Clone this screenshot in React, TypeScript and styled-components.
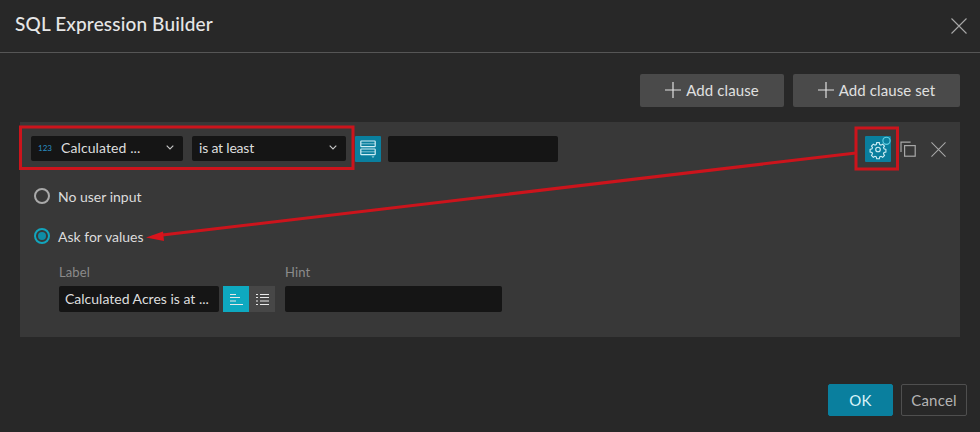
import React from "react";
import styled, { createGlobalStyle } from "styled-components";

const GlobalStyle = createGlobalStyle`
  html, body {
    margin: 0;
    padding: 0;
    background: #282828;
  }
  * {
    box-sizing: border-box;
  }
`;

const Dialog = styled.div`
  position: relative;
  width: 980px;
  height: 432px;
  overflow: hidden;
  display: flex;
  flex-direction: column;
  background: #282828;
  color: #e4e4e4;
  font-family: Lato, "Open Sans", sans-serif;
`;

const Header = styled.header`
  height: 53px;
  flex: none;
  display: flex;
  align-items: center;
  justify-content: space-between;
  padding: 0 13px 5px 15px;
  border-bottom: 1px solid #565656;
`;

const Title = styled.h1`
  margin: 0;
  font-size: 19px;
  font-weight: 500;
  letter-spacing: 0.15px;
  color: #e6e6e6;
`;

const IconOnly = styled.span<{ $ml?: number; $mt?: number }>`
  display: flex;
  align-items: center;
  justify-content: center;
  margin-left: ${(p) => p.$ml ?? 0}px;
  margin-top: ${(p) => p.$mt ?? 0}px;
  color: #a8a8a8;
`;

const Body = styled.main`
  flex: 1;
  display: flex;
  flex-direction: column;
  padding: 21px 20px 0;
`;

const ActionRow = styled.div`
  display: flex;
  justify-content: flex-end;
  gap: 9px;
`;

const AddButton = styled.button<{ $width: number }>`
  width: ${(p) => p.$width}px;
  height: 33px;
  display: flex;
  align-items: center;
  justify-content: center;
  gap: 5px;
  border: none;
  border-radius: 2px;
  background: #4a4a4a;
  color: #e0e0e0;
  font: 400 15px/30px Lato, sans-serif;
  letter-spacing: 0.1px;
  padding: 0 0 1px;
`;

const Card = styled.section`
  margin-top: 15px;
  height: 215px;
  background: #383838;
  padding: 14px 11px 0;
  display: flex;
  flex-direction: column;
`;

const ClauseRow = styled.div`
  display: flex;
  align-items: flex-start;
`;

const Select = styled.div<{ $width: number; $gap?: number }>`
  width: ${(p) => p.$width}px;
  height: 25px;
  margin-right: ${(p) => p.$gap ?? 0}px;
  display: flex;
  align-items: center;
  background: #151515;
  border-radius: 2px;
  padding: 0 9px 2px 7px;
  font-size: 14px;
  color: #dedede;
`;

const TypeTag = styled.span`
  font-size: 8px;
  color: #2a8fc4;
  width: 23px;
`;

const SelectText = styled.span<{ $spacing?: number }>`
  flex: 1;
  white-space: nowrap;
  letter-spacing: ${(p) => p.$spacing ?? 0.1}px;
`;

const TealSquare = styled.span<{ $ml: number }>`
  width: 26px;
  height: 26px;
  margin-left: ${(p) => p.$ml}px;
  display: flex;
  align-items: center;
  justify-content: center;
  flex: none;
  background: #0a7f9e;
  color: #cfeef5;
  border-radius: 1px;
`;

const TextInput = styled.div<{ $width: number; $ml?: number }>`
  width: ${(p) => p.$width}px;
  height: 26px;
  margin-left: ${(p) => p.$ml ?? 0}px;
  display: flex;
  align-items: center;
  padding: 0 6px 2px;
  background: #151515;
  border-radius: 2px;
  font-size: 14px;
  color: #dedede;
  white-space: nowrap;
`;

const RowTools = styled.div`
  margin-left: auto;
  display: flex;
  align-items: center;
  height: 26px;
  padding-right: 3px;
  gap: 9px;
`;

const RadioRow = styled.label<{ $mt: number }>`
  margin-top: ${(p) => p.$mt}px;
  padding-left: 3px;
  height: 20px;
  display: flex;
  align-items: center;
  gap: 8px;
  font-size: 14px;
  color: #dcdcdc;
`;

const RadioMark = styled.span<{ $on?: boolean }>`
  width: 16px;
  height: 16px;
  flex: none;
  border-radius: 50%;
  border: 2px solid ${(p) => (p.$on ? "#12a5bd" : "#a9a9a9")};
  display: flex;
  align-items: center;
  justify-content: center;
  &::after {
    content: "";
    display: ${(p) => (p.$on ? "block" : "none")};
    width: 8px;
    height: 8px;
    border-radius: 50%;
    background: #0f8ca6;
  }
`;

const FieldRow = styled.div`
  margin-top: 18px;
  padding-left: 28px;
  display: flex;
  gap: 10px;
`;

const Field = styled.div`
  display: flex;
  flex-direction: column;
  gap: 6px;
`;

const FieldLabel = styled.span`
  font-size: 13px;
  line-height: 16px;
  color: #8b8b8b;
  letter-spacing: 0.1px;
`;

const InputWithToggle = styled.div`
  display: flex;
  align-items: center;
`;

const Toggle = styled.span<{ $on?: boolean; $ml?: number }>`
  width: 26px;
  height: 26px;
  margin-left: ${(p) => p.$ml ?? 0}px;
  display: flex;
  align-items: center;
  justify-content: center;
  background: ${(p) => (p.$on ? "#0ea9c0" : "#474747")};
  color: #e8e8e8;
`;

const Footer = styled.footer`
  display: flex;
  justify-content: flex-end;
  gap: 8px;
  padding: 0 13px 16px 0;
`;

const FootButton = styled.button<{ $primary?: boolean }>`
  width: ${(p) => (p.$primary ? 65 : 66)}px;
  height: 32px;
  border-radius: 2px;
  border: 1px solid ${(p) => (p.$primary ? "#0a7f9e" : "#4f4f4f")};
  background: ${(p) => (p.$primary ? "#0a7f9e" : "transparent")};
  color: ${(p) => (p.$primary ? "#d8f3f8" : "#b4b4b4")};
  font: 400 15px Lato, sans-serif;
  letter-spacing: 0.2px;
  padding: 0 0 1px;
`;

const Annotations = styled.svg`
  position: absolute;
  inset: 0;
  pointer-events: none;
`;

const Cross = ({ size }: { size: number }) => (
  <svg width={size} height={size} viewBox="0 0 16 16" fill="none" stroke="currentColor" strokeWidth="1.1">
    <path d="M.5.5l15 15M15.5.5l-15 15" />
  </svg>
);

const Plus = () => (
  <svg width="16" height="16" viewBox="0 0 16 16" fill="none" stroke="currentColor" strokeWidth="1.2">
    <path d="M8 0v16M0 8h16" />
  </svg>
);

const Chevron = () => (
  <svg width="8" height="5" viewBox="0 0 8 5" fill="none" stroke="#c8c8c8" strokeWidth="1.1">
    <path d="M.7.7L4 4l3.3-3.3" />
  </svg>
);

const StackedRows = () => (
  <svg width="16" height="18" viewBox="0 0 16 18" fill="none" stroke="currentColor" strokeWidth="1.2">
    <rect x=".8" y="1" width="14.4" height="5.6" rx=".6" />
    <rect x=".8" y="9" width="14.4" height="5.6" rx=".6" />
    <path d="M1 3.8h14M1 11.8h14" strokeWidth=".6" />
    <path d="M11.5 16.4h3l-1.5 1.4z" fill="currentColor" stroke="none" />
  </svg>
);

const Gear = () => (
  <svg width="26" height="26" viewBox="0 0 26 26" fill="none" stroke="currentColor" strokeWidth="1.1">
    <circle cx="13" cy="13.5" r="2.3" />
    <path d="M11.7 6.6h2.6l.4 1.9 1.3.6 1.7-1 1.8 1.9-1 1.6.5 1.3 1.9.5v2.6l-1.9.5-.5 1.3 1 1.6-1.8 1.9-1.7-1-1.3.6-.4 1.9h-2.6l-.4-1.9-1.3-.6-1.7 1-1.8-1.9 1-1.6-.5-1.3-1.9-.5v-2.6l1.9-.5.5-1.3-1-1.6 1.8-1.9 1.7 1 1.3-.6z" />
    <circle cx="21.5" cy="4.8" r="3.6" fill="#0a7f9e" stroke="#63cfe2" />
  </svg>
);

const Copy = () => (
  <svg width="16" height="16" viewBox="0 0 16 16" fill="none" stroke="#a8a8a8" strokeWidth="1.2">
    <rect x="4.6" y="4.6" width="10.6" height="10.6" />
    <path d="M1 11V1.2h9.6" />
  </svg>
);

const AlignLeftLines = () => (
  <svg width="13" height="13" viewBox="0 0 13 13" fill="none" stroke="currentColor" strokeWidth="1.1">
    <path d="M0 1.5h6M0 4.5h10M0 8h6M0 11.5h13" />
  </svg>
);

const ListLines = () => (
  <svg width="13" height="13" viewBox="0 0 13 13" fill="none" stroke="currentColor" strokeWidth="1.1">
    <path d="M0 1.5h2M4 1.5h9M0 4.5h2M4 4.5h9M0 8h2M4 8h9M0 11.5h2M4 11.5h9" />
  </svg>
);

export default function App() {
  return (
    <>
      <GlobalStyle />
      <Dialog>
        <Header>
          <Title>SQL Expression Builder</Title>
          <IconOnly $mt={5}>
            <Cross size={16} />
          </IconOnly>
        </Header>

        <Body>
          <ActionRow>
            <AddButton $width={144}>
              <Plus />
              Add clause
            </AddButton>
            <AddButton $width={167}>
              <Plus />
              Add clause set
            </AddButton>
          </ActionRow>

          <Card>
            <ClauseRow>
              <Select $width={152} $gap={9}>
                <TypeTag>123</TypeTag>
                <SelectText>Calculated ...</SelectText>
                <Chevron />
              </Select>
              <Select $width={154}>
                <SelectText $spacing={-0.2}>is at least</SelectText>
                <Chevron />
              </Select>
              <TealSquare $ml={9}>
                <StackedRows />
              </TealSquare>
              <TextInput $width={170} $ml={7} />
              <RowTools>
                <TealSquare $ml={0}>
                  <Gear />
                </TealSquare>
                <Copy />
                <IconOnly $ml={6}>
                  <Cross size={15} />
                </IconOnly>
              </RowTools>
            </ClauseRow>

            <RadioRow $mt={24}>
              <RadioMark />
              No user input
            </RadioRow>
            <RadioRow $mt={20}>
              <RadioMark $on />
              Ask for values
            </RadioRow>

            <FieldRow>
              <Field>
                <FieldLabel>Label</FieldLabel>
                <InputWithToggle>
                  <TextInput $width={160}>Calculated Acres is at ...</TextInput>
                  <Toggle $on $ml={4}>
                    <AlignLeftLines />
                  </Toggle>
                  <Toggle>
                    <ListLines />
                  </Toggle>
                </InputWithToggle>
              </Field>
              <Field>
                <FieldLabel>Hint</FieldLabel>
                <TextInput $width={217} />
              </Field>
            </FieldRow>
          </Card>
        </Body>

        <Footer>
          <FootButton $primary>OK</FootButton>
          <FootButton>Cancel</FootButton>
        </Footer>

        <Annotations width="980" height="432" viewBox="0 0 980 432" fill="none">
          <rect x="20.5" y="127" width="332.5" height="41.5" stroke="#cc141c" strokeWidth="3" />
          <rect x="856" y="128" width="41.5" height="41" stroke="#cc141c" strokeWidth="3" />
          <path d="M856 153L158 235.5" stroke="#cc141c" strokeWidth="3" />
          <path d="M146 237.5l17-6 1 9.5z" fill="#d8141c" />
        </Annotations>
      </Dialog>
    </>
  );
}
